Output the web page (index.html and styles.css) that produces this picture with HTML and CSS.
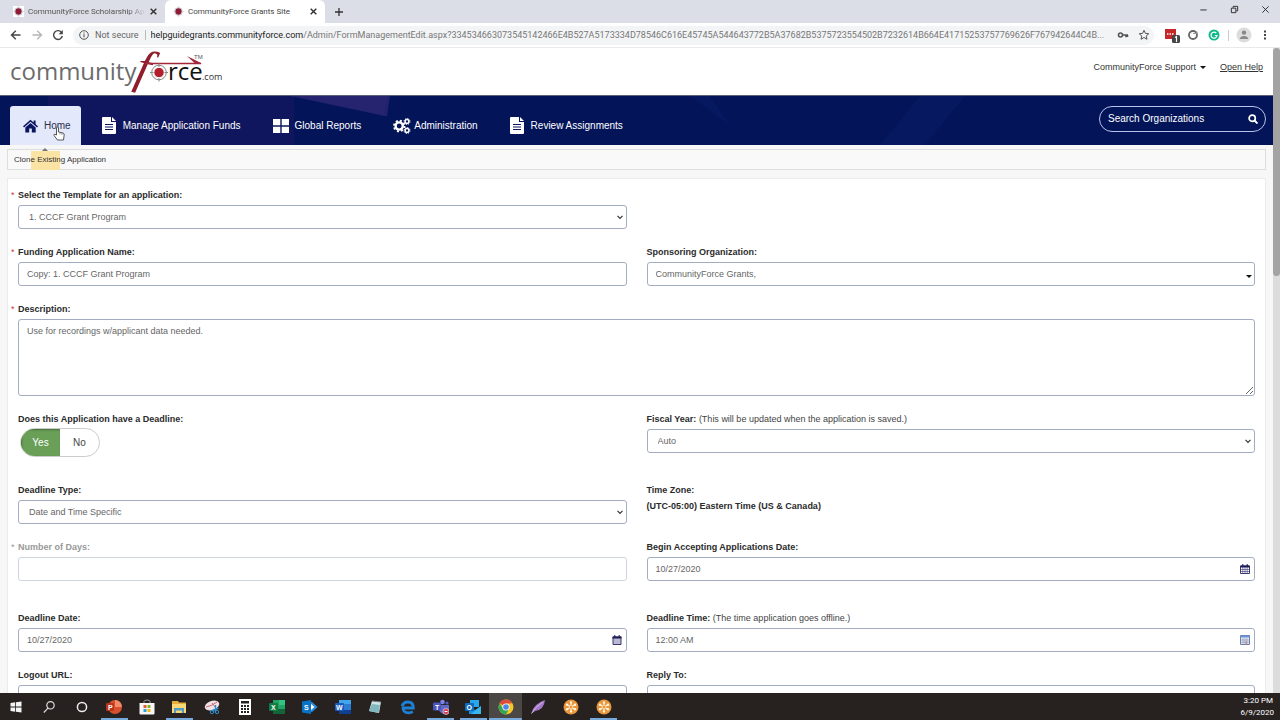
FILE: index.html
```html
<!DOCTYPE html>
<html lang="en">
<head>
<meta charset="utf-8">
<title>CommunityForce Grants Site</title>
<link rel="stylesheet" href="styles.css">
</head>
<body>
<svg class="defs" aria-hidden="true">
  <symbol id="target" viewBox="0 0 14 14"><rect width="14" height="14" fill="#fff"/><circle cx="7" cy="7" r="5" fill="none" stroke="#b9bcc4"/><path d="M7 0v14M0 7h14" stroke="#d3d5da"/><circle cx="7" cy="7" r="4" fill="#8c1c35"/></symbol>
  <symbol id="close" viewBox="0 0 8 8"><path d="M1.5 1.5l5 5M6.5 1.5l-5 5" stroke="currentColor" stroke-width="1.3"/></symbol>
  <symbol id="doc" viewBox="0 0 15 17"><path d="M1 0h8v5h5v11a1 1 0 0 1-1 1H1a1 1 0 0 1-1-1V1a1 1 0 0 1 1-1z" fill="#fff"/><path d="M10 0l4 4h-4z" fill="#fff"/><path d="M3 7.5h8M3 10h8M3 12.500h8" stroke="#0b1560" stroke-width="1.100"/></symbol>
  <symbol id="chev" viewBox="0 0 8 8"><path d="M1.500 2.800L4 5.300l2.500-2.500" fill="none" stroke="#333" stroke-width="1.200"/></symbol>
  <symbol id="cal" viewBox="0 0 10 10"><path d="M.5 2h9v7.500h-9z" fill="#fff" stroke="#3a3870"/><path d="M.5 1.500h9v2h-9z" fill="#1d1b57"/><path d="M2.800 0v2M7.200 0v2" stroke="#1d1b57"/><path d="M.5 5.500h9M.5 7.500h9M2.800 3v6.500M5 3v6.500M7.200 3v6.500" stroke="#3a3870" stroke-width=".6"/></symbol>
  <symbol id="orange" viewBox="0 0 16 16"><circle cx="8" cy="8" r="7.500" fill="#e9953b"/><g stroke="#fff4d8" stroke-width="1.200"><path d="M8 3v10M3.700 5.500l8.600 5M12.300 5.500l-8.600 5"/></g><circle cx="8" cy="8" r="1.300" fill="#e9953b"/><g fill="#fff4d8"><circle cx="8" cy="3.500" r="1.200"/><circle cx="8" cy="12.500" r="1.200"/><circle cx="4" cy="5.700" r="1.200"/><circle cx="12" cy="5.700" r="1.200"/><circle cx="4" cy="10.300" r="1.200"/><circle cx="12" cy="10.300" r="1.200"/></g></symbol>
</svg>

<header class="browser">
  <div class="tabs">
    <div class="tab tab-first"><svg class="fav"><use href="#target"/></svg><span class="tab-title fade">CommunityForce Scholarship Ap</span><button class="x" aria-label="Close tab"><svg><use href="#close"/></svg></button></div>
    <div class="tab active"><svg class="fav"><use href="#target"/></svg><span class="tab-title">CommunityForce Grants Site</span><button class="x" aria-label="Close tab"><svg><use href="#close"/></svg></button></div>
    <button class="new-tab" aria-label="New tab"><svg viewBox="0 0 10 10"><path d="M5 1v8M1 5h8" stroke="#333" stroke-width="1.300"/></svg></button>
    <div class="window-buttons">
      <button aria-label="Minimize"><svg viewBox="0 0 10 10"><path d="M1.500 5.500h7" stroke="#222"/></svg></button>
      <button aria-label="Restore"><svg viewBox="0 0 10 10"><path d="M1.500 3.500h5v5h-5zM3.500 3V1.500h5v5H7" fill="none" stroke="#222"/></svg></button>
      <button aria-label="Close"><svg viewBox="0 0 10 10"><path d="M1.500 1.500l7 7M8.500 1.500l-7 7" stroke="#222"/></svg></button>
    </div>
  </div>
  <div class="toolbar">
    <button aria-label="Back"><svg viewBox="0 0 12 12"><path d="M10.500 6h-9M5.800 1.700L1.500 6l4.300 4.300" fill="none" stroke="#444" stroke-width="1.400"/></svg></button>
    <button aria-label="Forward"><svg viewBox="0 0 12 12"><path d="M1.500 6h9M6.200 1.700L10.500 6l-4.300 4.300" fill="none" stroke="#b4b4b4" stroke-width="1.300"/></svg></button>
    <button aria-label="Reload"><svg viewBox="0 0 12 12"><path d="M9.800 3.800A4.400 4.400 0 1 0 10.300 7" fill="none" stroke="#444" stroke-width="1.400"/><path d="M10.800 1v4.200H6.600z" fill="#444"/></svg></button>
    <div class="address">
      <svg class="info" viewBox="0 0 10 10"><circle cx="5" cy="5" r="4.300" fill="none" stroke="#555"/><path d="M5 4.300v3M5 2.400v1.100" stroke="#555" stroke-width="1.100"/></svg>
      <span class="secure">Not secure</span>
      <span class="url"><b>helpguidegrants.communityforce.com</b>/Admin/FormManagementEdit.aspx?334534663073545142466E4B527A5173334D78546C616E45745A544643772B5A37682B5375723554502B7232614B664E41715253757769626F767942644C4B...</span>
      <button aria-label="Saved password"><svg viewBox="0 0 12 12"><circle cx="3.500" cy="6" r="2" fill="none" stroke="#555" stroke-width="1.600"/><path d="M5.500 6h5.500M9 6v2.300M10.500 6v2" stroke="#555" stroke-width="1.600"/></svg></button>
      <button aria-label="Bookmark"><svg viewBox="0 0 12 12"><path d="M6 1.300l1.400 3.100 3.400.3-2.600 2.300.8 3.300-3-1.800-3 1.800.8-3.300L1.200 4.700l3.400-.3z" fill="none" stroke="#555"/></svg></button>
    </div>
    <div class="extensions">
      <button aria-label="Password manager"><svg class="wide" viewBox="0 0 16 16"><path d="M1 2h11v10H1z" fill="#c4282b"/><path d="M3 7h7" stroke="#fff" stroke-width="1.300" stroke-dasharray="1.500 1"/><rect x="8" y="8" width="8" height="8" rx="1.500" fill="#444"/><path d="M11 10.500l1.500-1V15" fill="none" stroke="#fff" stroke-width="1.200"/></svg></button>
      <button aria-label="Extension"><svg viewBox="0 0 12 12"><circle cx="6" cy="6" r="4" fill="#fff" stroke="#666" stroke-width="1.800"/><path d="M6 4.500h4v-2" fill="none" stroke="#999"/></svg></button>
      <button aria-label="Writing assistant"><svg viewBox="0 0 12 12"><circle cx="6" cy="6" r="5.500" fill="#11ba88"/><path d="M8.300 4.200A3 3 0 1 0 9 6.500H6.800" fill="none" stroke="#fff" stroke-width="1.200"/></svg></button>
      <i class="divider"></i>
      <button aria-label="Profile"><svg class="wide" viewBox="0 0 16 16"><circle cx="8" cy="8" r="7.500" fill="#dcdcdc"/><circle cx="8" cy="5.600" r="2.200" fill="#888"/><path d="M3.800 12c0-4 8.400-4 8.400 0z" fill="#888"/></svg></button>
      <button aria-label="Menu"><svg viewBox="0 0 12 12"><path d="M5 1.500h2v2H5zM5 5h2v2H5zM5 8.500h2v2H5z" fill="#444"/></svg></button>
    </div>
  </div>
</header>

<div class="viewport">
<div class="page">
  <div class="masthead">
    <a href="#" class="logo" aria-label="communityforce.com">
      <svg width="216" height="48" viewBox="0 0 216 48">
        <text x="1" y="32" class="lg-main">community</text>
        <text x="127" y="36" class="lg-f" transform="rotate(14 136 24)">f</text>
        <path d="M136 15.500h56" stroke="#a3293a" stroke-width="1.300"/>
        <path d="M178 8l15 7.500h-7z" fill="#a3293a"/>
        <text x="185" y="11" class="lg-tm">TM</text>
        <circle cx="150" cy="24.500" r="7.300" fill="#fff" stroke="#888"/>
        <path d="M150 15.500v18M141 24.500h18" stroke="#888"/>
        <circle cx="150" cy="24.500" r="5.200" fill="#b31e2d" stroke="#fff"/>
        <text x="159" y="32" class="lg-rce">rce</text>
        <text x="193" y="32" class="lg-com">.com</text>
      </svg>
    </a>
    <div class="account">
      <button class="user">CommunityForce Support <i class="caret"></i></button>
      <a href="#">Open Help</a>
    </div>
  </div>

  <nav class="nav">
    <svg class="nav-art" viewBox="0 0 1273 50" preserveAspectRatio="none" aria-hidden="true"><path d="M48 0h340l-4 20-90-20v50H48z" fill="#43206e" opacity=".2"/><path d="M290 0h100l-3 21z" fill="#4a3a8c" opacity=".4"/><path d="M920 0h45l-40 50h-45zM690 0h20l20 30z" fill="#1b3a8c" opacity=".14"/></svg>
    <a href="#" class="nav-item current"><svg class="home" viewBox="0 0 15 14"><path d="M7.500.7L0 7.300l1 1.100 6.500-5.600L14 8.400l1-1.100-2.400-2.100V1.500h-2v1.900z" fill="#0b1560"/><path d="M7.500 4L2.300 8.500V13.500h3.900v-4h2.600v4h3.900v-5z" fill="#0b1560"/></svg>Home</a>
    <a href="#" class="nav-item"><svg class="file"><use href="#doc"/></svg>Manage Application Funds</a>
    <a href="#" class="nav-item"><svg class="tiles" viewBox="0 0 16 14"><path d="M0 0h7.300v6.300H0zM8.700 0H16v6.300H8.700zM0 7.700h7.300V14H0zM8.700 7.700H16V14H8.700z" fill="#fff"/></svg>Global Reports</a>
    <a href="#" class="nav-item gears-item"><svg class="gears" viewBox="0 0 18 16"><g fill="none" stroke="#fff"><circle cx="6.200" cy="8" r="3.600" stroke-width="2.400"/><circle cx="6.200" cy="8" r="5.300" stroke-width="1.800" stroke-dasharray="2.100 2.060"/><circle cx="14" cy="3.500" r="1.900" stroke-width="1.500"/><circle cx="14" cy="3.500" r="3" stroke-width="1" stroke-dasharray="1.200 1.150"/><circle cx="14" cy="12.500" r="1.900" stroke-width="1.500"/><circle cx="14" cy="12.500" r="3" stroke-width="1" stroke-dasharray="1.200 1.150"/></g></svg>Administration</a>
    <a href="#" class="nav-item"><svg class="file"><use href="#doc"/></svg>Review Assignments</a>
    <form class="search"><input type="text" aria-label="Search Organizations" placeholder="Search Organizations"><button type="button" aria-label="Search"><svg viewBox="0 0 10 10"><circle cx="4.200" cy="4.200" r="3.100" fill="none" stroke="#fff" stroke-width="1.700"/><path d="M6.500 6.500l3 3" stroke="#fff" stroke-width="1.900"/></svg></button></form>
    <svg class="pointer" viewBox="0 0 12 15" aria-hidden="true"><path d="M3.500 9V2a1 1 0 0 1 2 0v4l4.500 1q1.300.4 1.200 1.800L10.500 14h-6L1 9.500q-.3-1.500 1-1.200z" fill="#fff" stroke="#444" stroke-width=".9"/><path d="M7 6.500v2M9 7v2" stroke="#777" stroke-width=".7"/></svg>
  </nav>

  <main class="content">
    <div class="crumb"><i class="glow"></i><i class="tip"></i><span>Clone Existing Application</span></div>
    <form class="card">
      <div class="field">
        <label for="template" class="req">Select the Template for an application:</label>
        <div class="control"><select id="template"><option>1. CCCF Grant Program</option></select><svg class="chev"><use href="#chev"/></svg></div>
      </div>
      <div class="field start">
        <label for="name" class="req">Funding Application Name:</label>
        <div class="control"><input id="name" type="text" value="Copy: 1. CCCF Grant Program"></div>
      </div>
      <div class="field">
        <label for="sponsor">Sponsoring Organization:</label>
        <div class="control"><input id="sponsor" type="text" role="combobox" aria-expanded="false" value="CommunityForce Grants,"><i class="caret combo"></i></div>
      </div>
      <div class="field full">
        <label for="desc" class="req">Description:</label>
        <textarea id="desc">Use for recordings w/applicant data needed.</textarea>
      </div>
      <fieldset class="field tall">
        <legend>Does this Application have a Deadline:</legend>
        <div class="toggle">
          <input type="radio" name="deadline" id="yes" checked><label for="yes">Yes</label>
          <input type="radio" name="deadline" id="no"><label for="no">No</label>
        </div>
      </fieldset>
      <div class="field tall">
        <label for="fiscal">Fiscal Year: <span>(This will be updated when the application is saved.)</span></label>
        <div class="control"><select id="fiscal"><option>Auto</option></select><svg class="chev"><use href="#chev"/></svg></div>
      </div>
      <div class="field">
        <label for="type">Deadline Type:</label>
        <div class="control"><select id="type"><option>Date and Time Specific</option></select><svg class="chev"><use href="#chev"/></svg></div>
      </div>
      <div class="field">
        <b class="label">Time Zone:</b>
        <b class="label">(UTC-05:00) Eastern Time (US &amp; Canada)</b>
      </div>
      <div class="field tall off">
        <label for="days" class="req">Number of Days:</label>
        <div class="control"><input id="days" type="text" disabled></div>
      </div>
      <div class="field tall">
        <label for="begin">Begin Accepting Applications Date:</label>
        <div class="control"><input id="begin" type="text" value="10/27/2020"><button type="button" class="pick" aria-label="Choose date"><svg><use href="#cal"/></svg></button></div>
      </div>
      <div class="field">
        <label for="date">Deadline Date:</label>
        <div class="control"><input id="date" type="text" value="10/27/2020"><button type="button" class="pick" aria-label="Choose date"><svg viewBox="0 0 10 10"><path d="M1 2h8v7.500H1z" fill="#b9b9d4" stroke="#3b3970"/><path d="M.5 1.500h9v2h-9z" fill="#1d1b57"/><path d="M2.800 0v2M7.200 0v2" stroke="#1d1b57"/></svg></button></div>
      </div>
      <div class="field">
        <label for="time">Deadline Time: <span>(The time application goes offline.)</span></label>
        <div class="control"><input id="time" type="text" value="12:00 AM"><button type="button" class="pick" aria-label="Choose time"><svg viewBox="0 0 10 10"><path d="M.5.5h9v9h-9z" fill="#e9edf5" stroke="#6d7fa8"/><path d="M.5.5h9v2h-9z" fill="#6c92d6"/><path d="M3 3v6M5 3v6M7 3v6M1 5h8M1 7.200h8" stroke="#8f9cb8" stroke-width=".7"/><path d="M5.500 6.500h1.500v2H5.500z" fill="#c77b8c"/></svg></button></div>
      </div>
      <div class="field">
        <label for="logout">Logout URL:</label>
        <div class="control"><input id="logout" type="text"></div>
      </div>
      <div class="field">
        <label for="reply">Reply To:</label>
        <div class="control"><input id="reply" type="text"></div>
      </div>
    </form>
  </main>
</div>
<div class="scrollbar" aria-hidden="true"><i></i></div>
</div>

<footer class="taskbar">
  <div class="apps">
    <button aria-label="Start"><svg viewBox="0 0 16 16"><path d="M2.500 4l4.700-.7v4.300H2.500zM8 3.200l5.500-.8v5.200H8zM2.500 8.400h4.700v4.300l-4.700-.7zM8 8.400h5.500v5.200L8 12.800z" fill="#f4f4f4"/></svg></button>
    <button aria-label="Search"><svg viewBox="0 0 16 16"><circle cx="9.500" cy="6.300" r="3.700" fill="none" stroke="#ddd" stroke-width="1.200"/><path d="M7 9.200L2.800 13.500" stroke="#ddd" stroke-width="1.200"/></svg></button>
    <button aria-label="Cortana"><svg viewBox="0 0 16 16"><circle cx="8" cy="8" r="4.600" fill="none" stroke="#eee" stroke-width="1.500"/></svg></button>
    <button aria-label="PowerPoint" class="open"><svg viewBox="0 0 16 16"><circle cx="9" cy="8" r="7" fill="#d9502f"/><path d="M9 1a7 7 0 0 1 7 7H9z" fill="#f08a68"/><rect y="4" width="8" height="8" rx="1" fill="#b7351b"/><text x="2" y="11" class="ico">P</text></svg></button>
    <button aria-label="Store"><svg viewBox="0 0 16 16"><path d="M5 5V2.500q0-1.500 3-1.500t3 1.500V5" fill="none" stroke="#999"/><path d="M.5 4h15v10.500q0 1-1 1h-13q-1 0-1-1z" fill="#f6f6f6"/><path d="M4.500 6h3v3h-3z" fill="#e75a28"/><path d="M8.500 6h3v3h-3z" fill="#7cb82f"/><path d="M4.500 10h3v3h-3z" fill="#2c9fdd"/><path d="M8.500 10h3v3h-3z" fill="#f5b90f"/></svg></button>
    <button aria-label="File Explorer" class="open"><svg viewBox="0 0 16 16"><path d="M1 2h6l1 1.500h7V14H1z" fill="#e5ae3a"/><path d="M1 5h14v9H1z" fill="#f9d777"/><path d="M3 9h10v5h-2v-2.500H5V14H3z" fill="#4f9cc7"/></svg></button>
    <button aria-label="Snipping Tool"><svg viewBox="0 0 16 16"><ellipse cx="8" cy="6.500" rx="7.500" ry="4.500" transform="rotate(-20 8 6.500)" fill="#eee2e4"/><path d="M2 8q6-1 11-5M8 4l3 4" stroke="#ce6575" fill="none"/><path d="M11.500 6v8M7.500 12l7-3" stroke="#328ac8" stroke-width="1.400"/><circle cx="8" cy="13" r="1.700" fill="none" stroke="#328ac8"/><circle cx="13" cy="13" r="1.700" fill="none" stroke="#328ac8"/></svg></button>
    <button aria-label="Calculator"><svg viewBox="0 0 16 16"><path d="M2 0h12v16H2z" fill="#fff"/><path d="M4 2h8v2.500H4z" fill="#222"/><path d="M4 7h8M4 10h8M4 13h8" stroke="#222" stroke-width="1.800" stroke-dasharray="2 1"/></svg></button>
    <button aria-label="Excel"><svg viewBox="0 0 16 16"><path d="M4 1h12v14H4z" fill="#21a366"/><path d="M10 1h6v5h-6z" fill="#33c481"/><path d="M4 10h12v5H4z" fill="#126439"/><rect y="4" width="9" height="8" rx="1" fill="#107c41"/><text x="2" y="11" class="ico">X</text></svg></button>
    <button aria-label="SharePoint"><svg viewBox="0 0 16 16"><path d="M9 3.500L14 8l-5 4.500" fill="#fff" stroke="#2b8be0" stroke-width="2.200"/><path d="M0 2.500L9 1v14l-9-1.500z" fill="#0873c4"/><text x="2" y="11" class="ico">S</text></svg></button>
    <button aria-label="Word"><svg viewBox="0 0 16 16"><path d="M4 1h12v14H4z" fill="#2b7cd3"/><path d="M4 1h12v4H4z" fill="#41a5ee"/><path d="M4 11h12v4H4z" fill="#103f91"/><rect y="4" width="9" height="8" rx="1" fill="#185abd"/><text x="1" y="11" class="ico">W</text></svg></button>
    <button aria-label="Notepad"><svg viewBox="0 0 16 16"><path d="M5 2l9 1-2 11-10-2z" fill="#cfe5e7"/><path d="M5 5l8 1-1.500 8L2 12z" fill="#80b8bd"/><path d="M5 2l9 1" stroke="#777"/></svg></button>
    <button aria-label="Edge"><svg viewBox="0 0 16 16"><path d="M2.500 9h10.800q0-6-5.300-6-4.500 0-6 4.300M3 8q-.2 5.800 5.500 5.800 2.500 0 4.300-1.200" fill="none" stroke="#1e80d5" stroke-width="2.800"/></svg></button>
    <button aria-label="Teams" class="open"><svg viewBox="0 0 16 16"><circle cx="9.500" cy="3" r="2.300" fill="#7b83eb"/><circle cx="14" cy="4" r="1.600" fill="#5059c9"/><path d="M6 6h10v5q-1 3-5 4-4-1-5-4z" fill="#6068c8"/><rect y="3.500" width="8" height="8" rx="1" fill="#4b53bc"/><text x="2" y="10.500" class="ico">T</text><circle cx="13" cy="12.500" r="3" fill="#d33d55" stroke="#eee" stroke-width=".6"/><path d="M11.500 12.500h3" stroke="#fff"/></svg></button>
    <button aria-label="Outlook" class="open"><svg viewBox="0 0 16 16"><path d="M5 1h9v7H5z" fill="#28a8ea"/><path d="M4 7l6 4 6-4v8H4z" fill="#1490df"/><path d="M16 7v8H6z" fill="#3bb5ee"/><rect y="4" width="9" height="8" rx="1" fill="#0f6cbd"/><text x="1.500" y="11" class="ico">O</text></svg></button>
    <button aria-label="Chrome" class="open focus"><svg viewBox="0 0 16 16"><circle cx="8" cy="8" r="7.500" fill="#f6c526"/><path d="M8 8L1.500 4.300A7.500 7.500 0 0 1 14.500 4.300L8 4.500z" fill="#dd4b3e"/><path d="M1.500 4.300A7.500 7.500 0 0 0 8 15.500L11 10 8 8 5 9.500z" fill="#35a456"/><circle cx="8" cy="8" r="3.600" fill="#fff"/><circle cx="8" cy="8" r="2.800" fill="#4688ee"/></svg></button>
    <button aria-label="Quill"><svg viewBox="0 0 16 16"><path d="M1.500 14.500Q3 5 15 1q-1 10-10 11z" fill="#a477c9"/><path d="M1.500 14.500Q5 8 13 3" stroke="#dcc6ec" fill="none" stroke-width=".8"/></svg></button>
    <button aria-label="Meeting"><svg><use href="#orange"/></svg></button>
    <button aria-label="Meeting recorder" class="open"><svg><use href="#orange"/></svg></button>
  </div>
  <div class="clock"><span>3:20 PM</span><span>6/9/2020</span></div>
</footer>
</body>
</html>
```
FILE: styles.css
```css
* { box-sizing: border-box; }
body {
  margin: 0;
  height: 100vh;
  display: flex;
  flex-direction: column;
  overflow: hidden;
  font: 9px/16px "Liberation Sans", Arial, sans-serif;
  color: #333;
  background: #fff;
}
button { border: 0; padding: 0; background: none; font: inherit; color: inherit; display: flex; align-items: center; justify-content: center; }
svg { display: block; }
.defs { position: absolute; width: 0; height: 0; }

/* Browser frame */
.browser { flex: none; font-family: Roboto, "Open Sans", sans-serif; }
.tabs { display: flex; align-items: center; height: 23px; background: #dbdee6; }
.tab { display: flex; align-items: center; height: 23px; width: 160px; padding: 0 6px 0 8px; color: #555; }
.tab-first { width: 165px; padding-left: 13px; }
.tab.active { background: #fff; border-radius: 6px 6px 0 0; color: #444; }
.fav { width: 11px; height: 11px; margin-right: 4px; flex: none; }
.tab-title { flex: 1; overflow: hidden; white-space: nowrap; font-size: 8px; }
.fade { mask-image: linear-gradient(90deg, #000 85%, transparent); }
.x { width: 12px; height: 12px; color: #333; margin-left: 1px; }
.x svg { width: 9px; height: 9px; }
.new-tab { width: 28px; }
.new-tab svg { width: 10px; height: 10px; }
.window-buttons { margin-left: auto; display: flex; padding: 0 5px 4px 0; }
.window-buttons button { width: 20px; margin-left: 11px; }
.window-buttons svg { width: 9px; height: 9px; }
.toolbar { display: flex; align-items: center; height: 25px; padding: 0 5px; border-bottom: 1px solid #e9e9eb; background: #fff; }
.toolbar button { width: 21px; height: 20px; flex: none; }
.toolbar svg { width: 12px; height: 12px; }
.address { flex: 1; min-width: 0; display: flex; align-items: center; height: 19px; margin-left: 5px; padding: 0 0 0 6px; border-radius: 10px; background: #f3f4f6; }
.toolbar .info { width: 10px; height: 10px; flex: none; }
.secure { margin-left: 6px; padding-right: 6px; border-right: 1px solid #bbb; line-height: 10px; color: #666; white-space: nowrap; }
.url { flex: 1; min-width: 0; margin: 0 5px; overflow: hidden; white-space: nowrap; color: #777; }
.url b { font-weight: 400; color: #222; }
.extensions { display: flex; align-items: center; padding-left: 7px; }
.toolbar .wide { width: 16px; height: 16px; }
.divider { width: 1px; height: 11px; margin: 0 4px; background: #ccc; }

/* Page and its scrollbar */
.viewport { flex: 1; min-height: 0; display: flex; }
.page { flex: 1; min-width: 0; overflow: hidden; background: #f7f7f7; }
.scrollbar { width: 7px; background: #dcdcdc; }
.scrollbar i { display: block; height: 228px; border-radius: 4px; background: #a3a3a3; }
.masthead { display: flex; justify-content: space-between; height: 47px; padding: 0 10px 0 9px; background: #fff; }
.lg-main, .lg-rce { font: 24px "Open Sans", "Noto Sans", sans-serif; fill: #6c6c6c; }
.lg-rce { fill: #111; }
.lg-f { font: italic 49px "Liberation Serif", serif; fill: #8f1d2c; }
.lg-tm { font: 6px "Liberation Sans", sans-serif; fill: #555; }
.lg-com { font: 9px "Open Sans", sans-serif; fill: #333; }
.account { display: flex; gap: 14px; height: 38px; align-items: center; color: #333; }
.account a { color: inherit; }
.user { gap: 4px; }
.caret { border: 3px solid transparent; border-top-color: #111; border-bottom: 0; }

.nav { position: relative; display: flex; align-items: flex-end; height: 50px; padding: 0 7px 0 10px; background: #031459; border-top: 1px solid #5a6078; }
.nav-art { position: absolute; inset: 0; width: 100%; height: 100%; }
.nav-item { position: relative; display: flex; align-items: center; gap: 6px; height: 39px; padding: 0 16px; font-size: 10px; color: #fff; text-decoration: none; white-space: nowrap; }
.nav-item.current { margin-right: 5px; padding: 0 10px 0 13px; border-radius: 3px 3px 0 0; background: #e3e9fb; color: #2b2f4d; }
.nav-item.gears-item { gap: 3px; }
.home { width: 15px; height: 14px; }
.file { width: 15px; height: 17px; }
.tiles { width: 16px; height: 14px; }
.gears { width: 18px; height: 16px; }
.search { position: relative; display: flex; align-items: center; align-self: center; width: 167px; height: 26px; margin: 0 0 4px auto; padding: 0 7px 0 8px; border: 1px solid #b9c3ea; border-radius: 13px; }
.search input { flex: 1; min-width: 0; border: 0; padding: 0; background: none; outline: 0; font: 10px "Liberation Sans", Arial, sans-serif; color: #fff; }
.search input::placeholder { color: #fff; opacity: 1; }
.search svg { width: 10px; height: 10px; }
.pointer { position: absolute; left: 53px; top: 30px; width: 12px; height: 15px; }

.content { padding: 4px 7px 0; }
.crumb { position: relative; height: 21px; padding: 0 6px; border: 1px solid #dedede; background: #f9f9f9; font-size: 8px; line-height: 19px; color: #333; }
.crumb span { position: relative; }
.glow { position: absolute; left: 23px; top: 1px; width: 29px; height: 19px; background: #fbe3a4; }
.tip { position: absolute; left: 34px; top: -2px; border: 3px solid transparent; border-bottom-color: #777; border-top: 0; }

/* Application form */
.card { display: grid; grid-template-columns: 1fr 1fr; gap: 15px 20px; margin-top: 8px; padding: 8px 10px 20px; border: 1px solid #ebebeb; background: #fff; }
.field { min-width: 0; min-height: 42px; margin: 0; padding: 0; border: 0; }
.start { grid-column: 1; }
.full { grid-column: 1 / -1; }
.tall { min-height: 56px; }
.field > label, .field > legend, .label { display: block; position: relative; padding: 0; font-weight: 700; color: #2b2b2b; }
.field > label span { font-weight: 400; color: #444; }
.req::before { content: "*"; position: absolute; left: -7px; font-weight: 400; color: #d03a3a; }
.control { position: relative; margin-top: 2px; }
.control input, .control select, textarea { display: block; width: 100%; height: 24px; margin: 0; padding: 0 8px; border: 1px solid #a3adc2; border-radius: 3px; background: #fff; font: 9px/12px "Liberation Sans", Arial, sans-serif; color: #666; outline: 0; }
.control select { appearance: none; padding: 0 10px; }
textarea { height: 77px; margin-top: 2px; padding: 5px 8px; }
.chev { position: absolute; right: 3px; top: 8px; width: 8px; height: 8px; pointer-events: none; }
.combo { position: absolute; right: 3px; top: 13px; }
.pick { position: absolute; right: 5px; top: 7px; }
.pick svg { width: 10px; height: 10px; }
.off > label, .off .req::before { color: #999; }
.control input:disabled { border-color: #cfd5dd; }
.toggle { display: flex; width: 80px; height: 29px; margin: 1px 0 0 2px; border: 1px solid #ccc; border-radius: 15px; overflow: hidden; background: #fff; }
.toggle input { position: absolute; opacity: 0; width: 0; height: 0; margin: 0; }
.toggle label { flex: 1; display: flex; align-items: center; justify-content: center; color: #444; font-size: 10px; }
.toggle input:checked + label { background: #6a9f58; box-shadow: inset 1px 1px 2px #46703a; color: #fff; }

/* Desktop taskbar */
.taskbar { flex: none; display: flex; justify-content: space-between; height: 27px; background: #272220; }
.apps { display: grid; grid-template-columns: repeat(19, 1fr); width: 620px; }
.apps button { padding: 0; }
.apps svg { width: 16px; height: 16px; }
.apps .open { background: linear-gradient(#76a9dc, #76a9dc) bottom / 27px 2px no-repeat; }
.apps .focus { background: linear-gradient(#76a9dc, #76a9dc) bottom / 100% 2px no-repeat #4b4745; }
.ico { font: bold 7px "Liberation Sans", sans-serif; fill: #fff; }
.clock { display: flex; flex-direction: column; align-items: flex-end; padding: 2px 6px 0 0; font: 8px/12px Roboto, "Open Sans", sans-serif; color: #fff; }
.clock span:first-child { padding-right: 1px; }
```
